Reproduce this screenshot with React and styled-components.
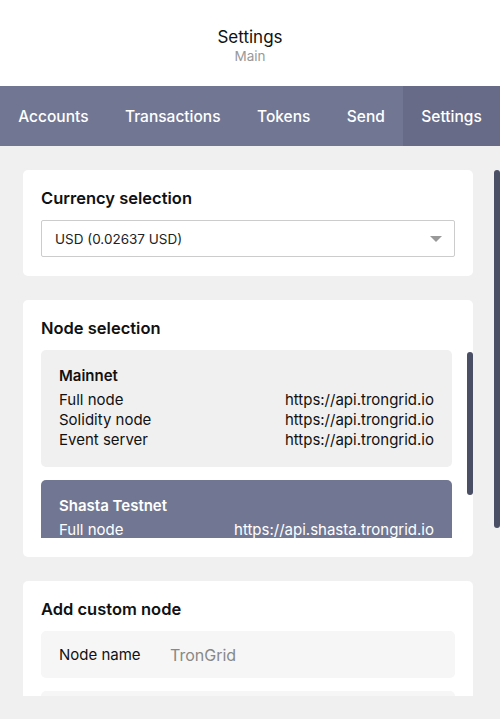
import { createGlobalStyle, styled } from "styled-components"

const GlobalStyle = createGlobalStyle`
  * { box-sizing: border-box; }
  html, body {
    margin: 0;
    padding: 0;
    background: #f0f0f0;
    font-family: Inter, "Noto Sans", "Liberation Sans", sans-serif;
    color: #111;
  }
`

const Page = styled.div`
  width: 500px;
  height: 696px;
  display: flex;
  flex-direction: column;
  background: #f0f0f0;
`

const Header = styled.header`
  height: 86px;
  background: #fff;
  display: flex;
  flex-direction: column;
  align-items: center;
  justify-content: center;
  padding-top: 5px;
`

const HeaderTitle = styled.div`
  font-size: 17px;
  line-height: 20px;
  color: #111;
`

const HeaderSub = styled.div`
  font-size: 13.5px;
  line-height: 18px;
  color: #999;
`

const Nav = styled.nav`
  height: 60px;
  display: flex;
  background: #717793;
`

const Tab = styled.div`
  flex: 1 1 auto;
  display: flex;
  align-items: center;
  justify-content: center;
  padding: 0 18px;
  font-size: 15.5px;
  font-weight: 500;
  color: #fff;
  white-space: nowrap;
  background: ${(props) => (props.$active ? "#676b87" : "transparent")};
`

const Viewport = styled.div`
  position: relative;
  flex: 1;
  min-height: 0;
`

const ScrollThumb = styled.div`
  position: absolute;
  right: 0;
  width: 6px;
  top: ${(props) => props.$top}px;
  height: ${(props) => props.$height}px;
  border-radius: 3px;
  background: #4b4f66;
`

const Content = styled.main`
  height: 100%;
  overflow-y: auto;
  scrollbar-width: none;
  padding: 24px 27px 24px 23px;
  display: flex;
  flex-direction: column;
  gap: 24px;

  &::-webkit-scrollbar { display: none; }
`

const Card = styled.section`
  flex-shrink: 0;
  background: #fff;
  border-radius: 5px;
  padding: 18px 18px 19px;
`

const CardTitle = styled.h2`
  margin: 0 0 12px;
  font-size: 16.5px;
  line-height: 20px;
  font-weight: 600;
  color: #111;
`

const Select = styled.div`
  height: 37px;
  border: 1px solid #ccc;
  border-radius: 2px;
  display: flex;
  align-items: center;
  justify-content: space-between;
  padding: 0 12px 0 13px;
  font-size: 13.5px;
  color: #222;
`

const Caret = styled.span`
  width: 0;
  height: 0;
  border-left: 6px solid transparent;
  border-right: 6px solid transparent;
  border-top: 6px solid #999;
`

const NodeListWrap = styled.div`
  position: relative;
  margin-right: -18px;
`

const NodeList = styled.div`
  height: 188px;
  overflow-y: auto;
  scrollbar-width: none;
  padding-right: 21px;
  display: flex;
  flex-direction: column;
  gap: 13px;

  &::-webkit-scrollbar { display: none; }
`

const NodeBox = styled.div`
  flex-shrink: 0;
  border-radius: 5px;
  padding: 16px 18px 17px;
  background: ${(props) => (props.$selected ? "#717793" : "#f0f0f0")};
  color: ${(props) => (props.$selected ? "#fff" : "#111")};
`

const NodeName = styled.div`
  font-size: 15px;
  line-height: 20px;
  font-weight: 600;
  margin-bottom: 4px;
`

const NodeRow = styled.div`
  display: flex;
  justify-content: space-between;
  font-size: 15px;
  line-height: 20px;
`

const Field = styled.label`
  height: 47px;
  display: flex;
  align-items: center;
  padding: 0 18px;
  background: #f6f6f6;
  border-radius: 5px;
  font-size: 15px;
  color: #111;

  & + & { margin-top: 13px; }
`

const FieldLabel = styled.span`
  width: 111px;
  flex-shrink: 0;
`

const FieldInput = styled.input`
  flex: 1;
  min-width: 0;
  padding: 0;
  border: none;
  outline: none;
  background: transparent;
  font-family: inherit;
  font-size: 16px;
  color: #222;

  &::placeholder { color: #888; }
`

const Button = styled.button`
  margin-top: 18px;
  width: 100%;
  height: 44px;
  border: none;
  border-radius: 5px;
  background: #717793;
  color: #fff;
  font-family: inherit;
  font-size: 15px;
  font-weight: 500;
`

const nodes = [
  {
    name: "Mainnet",
    full: "https://api.trongrid.io",
    solidity: "https://api.trongrid.io",
    event: "https://api.trongrid.io",
  },
  {
    name: "Shasta Testnet",
    full: "https://api.shasta.trongrid.io",
    solidity: "https://api.shasta.trongrid.io",
    event: "https://api.shasta.trongrid.io",
    selected: true,
  },
]

const tabs = ["Accounts", "Transactions", "Tokens", "Send", "Settings"]

export default function App() {
  return (
    <>
      <GlobalStyle />
      <Page>
        <Header>
          <HeaderTitle>Settings</HeaderTitle>
          <HeaderSub>Main</HeaderSub>
        </Header>

        <Nav>
          {tabs.map((tab) => (
            <Tab key={tab} $active={tab === "Settings"}>
              {tab}
            </Tab>
          ))}
        </Nav>

        <Viewport>
          <Content>
            <Card>
              <CardTitle>Currency selection</CardTitle>
              <Select>
                <span>USD (0.02637 USD)</span>
                <Caret />
              </Select>
            </Card>

            <Card>
              <CardTitle>Node selection</CardTitle>
              <NodeListWrap>
                <NodeList>
                  {nodes.map((node) => (
                    <NodeBox key={node.name} $selected={node.selected}>
                      <NodeName>{node.name}</NodeName>
                      <NodeRow>
                        <span>Full node</span>
                        <span>{node.full}</span>
                      </NodeRow>
                      <NodeRow>
                        <span>Solidity node</span>
                        <span>{node.solidity}</span>
                      </NodeRow>
                      <NodeRow>
                        <span>Event server</span>
                        <span>{node.event}</span>
                      </NodeRow>
                    </NodeBox>
                  ))}
                </NodeList>
                <ScrollThumb $top={2} $height={143} />
              </NodeListWrap>
            </Card>

            <Card>
              <CardTitle>Add custom node</CardTitle>
              <Field>
                <FieldLabel>Node name</FieldLabel>
                <FieldInput placeholder="TronGrid" />
              </Field>
              <Field>
                <FieldLabel>Full node</FieldLabel>
                <FieldInput placeholder="https://api.trongrid.io" />
              </Field>
              <Field>
                <FieldLabel>Solidity node</FieldLabel>
                <FieldInput placeholder="https://api.trongrid.io" />
              </Field>
              <Field>
                <FieldLabel>Event server</FieldLabel>
                <FieldInput placeholder="https://api.trongrid.io" />
              </Field>
              <Button>Add node</Button>
            </Card>
          </Content>
          <ScrollThumb $top={24} $height={358} />
        </Viewport>
      </Page>
    </>
  )
}
